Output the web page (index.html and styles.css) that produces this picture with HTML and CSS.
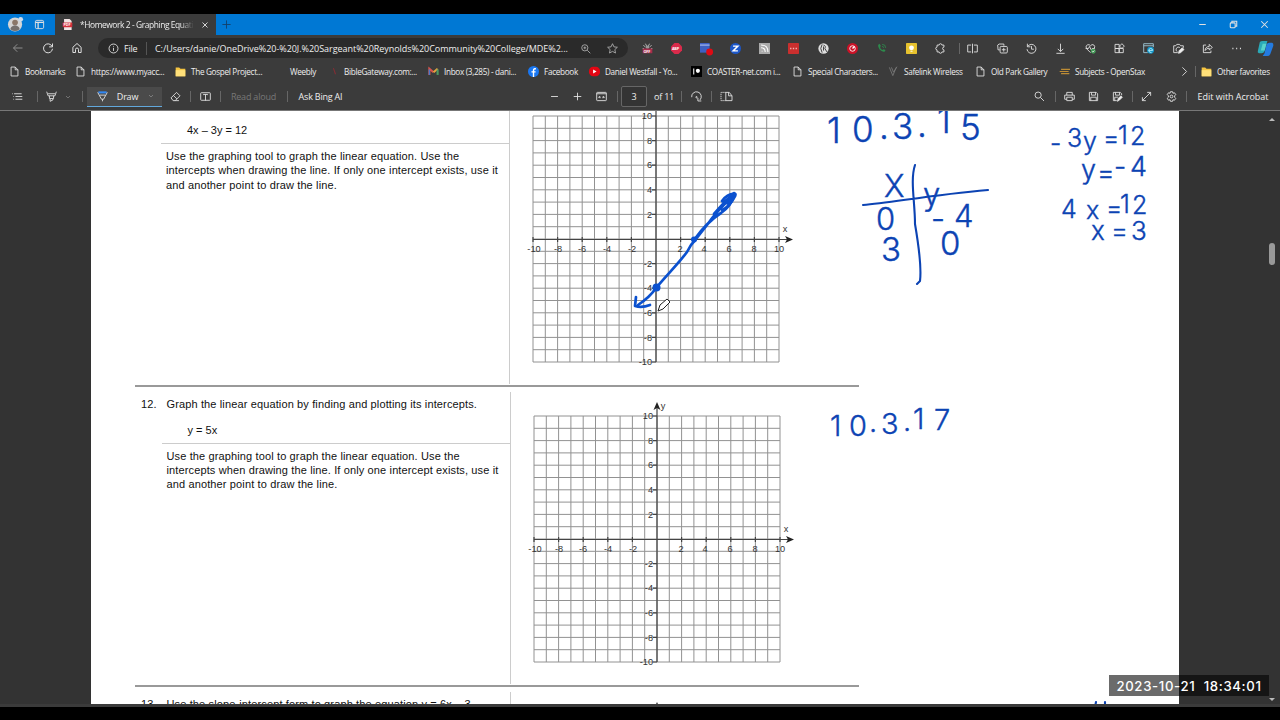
FILE: index.html
```html
<!DOCTYPE html>
<html lang="en">
<head>
<meta charset="UTF-8">
<meta name="viewport" content="width=device-width, initial-scale=1.0">
<title>Homework 2 - Graphing Equations</title>
<link rel="stylesheet" href="styles.css">
</head>
<body>

<!-- shared icons -->
<svg class="defs">
    <symbol id="doc" viewBox="0 0 16 16"><path d="M3 1.5h6l4 4v9H3zM9 1.5v4h4"/></symbol>
    <symbol id="folder" viewBox="0 0 16 16"><path d="M1 2h5l2 2h7v11H1z" fill="#f5c542" stroke="none"/><path d="M1 6h14v9H1z" fill="#ffe07a" stroke="none"/></symbol>
    <symbol id="chev" viewBox="0 0 16 16"><path d="M4 6l4 4 4-4"/></symbol>
</svg>

<div class="browser">
    <div class="titlebar">
        <svg class="avatar" viewBox="0 0 18 18"><circle cx="8.500" cy="9" r="7.500" fill="#d5d5d5"/><circle cx="8.500" cy="7" r="3" fill="#8b7768"/><path d="M3.500 14q1-4 5-4t5 4q-5 4-10 0z" fill="#75706d"/><circle cx="14.500" cy="3.500" r="2.500" fill="#ccdcec"/></svg>
        <svg class="icon spaces" viewBox="0 0 16 16"><rect x="2" y="2" width="12" height="12" rx="2"/><path d="M2 5h12M6 5v9" stroke-width="1.800"/></svg>
        <div class="tab">
            <svg class="icon" viewBox="0 0 16 16"><path d="M3 0h8l3 3v13H3z" fill="#f3e6e6" stroke="none"/><rect x="1" y="5" width="14" height="7" rx="1" fill="#d3313d" stroke="none"/><text x="2.300" y="10.700" class="pdf">PDF</text></svg>
            <span class="tab-title">*Homework 2 - Graphing Equati</span>
            <svg class="icon small" viewBox="0 0 16 16"><path d="M3 3l10 10M13 3L3 13" stroke-width="1.800"/></svg>
        </div>
        <svg class="icon plus" viewBox="0 0 16 16"><path d="M8 2v12M2 8h12"/></svg>
        <div class="window-buttons">
            <svg class="icon" viewBox="0 0 16 16"><path d="M4 8h8"/></svg>
            <svg class="icon" viewBox="0 0 16 16"><rect x="4" y="6" width="6" height="6" rx="1"/><path d="M6 6V4h6v6h-2"/></svg>
            <svg class="icon" viewBox="0 0 16 16"><path d="M4 4l8 8M12 4l-8 8"/></svg>
        </div>
    </div>

    <div class="address-row">
        <svg class="icon dim" viewBox="0 0 16 16"><path d="M14 8H2M7 3L2 8l5 5"/></svg>
        <svg class="icon" viewBox="0 0 16 16"><path d="M13.500 6A6 6 0 1 0 14 9M14 2v4.500H9.500"/></svg>
        <svg class="icon" viewBox="0 0 16 16"><path d="M2.500 7L8 2l5.500 5v7H10v-4q0-2-2-2t-2 2v4H2.500z"/></svg>
        <div class="url">
            <svg class="icon" viewBox="0 0 16 16"><circle cx="8" cy="8" r="6.500"/><path d="M8 7v4.500M8 4.300v1"/></svg>
            <span class="scheme">File</span>
            <span class="path">C:/Users/danie/OneDrive%20-%20J.%20Sargeant%20Reynolds%20Community%20College/MDE%2...</span>
            <svg class="icon search" viewBox="0 0 16 16"><circle cx="7" cy="7" r="4.500"/><path d="M10.500 10.500L15 15M5 7h4M7 5v4"/></svg>
            <svg class="icon star" viewBox="0 0 16 16"><path d="M8 1l2.100 4.600 5 .6-3.700 3.400 1 5L8 12.200l-4.400 2.400 1-5L.9 6.200l5-.6z"/></svg>
        </div>
        <div class="extensions">
            <svg class="icon" viewBox="0 0 16 16"><path d="M5 6L2 3m5 2L5 1m4 4l2-4m0 5l3-3M3 8H1m12 0h2" stroke="#bbb"/><circle cx="8" cy="6" r="2.500" fill="#999" stroke="none"/><rect x="1" y="8" width="14" height="7" rx="1" fill="#a62e4c" stroke="none"/><text x="2" y="14" class="badge">OFF</text></svg>
            <svg class="icon" viewBox="0 0 16 16"><path d="M5 0h6l5 5v6l-5 5H5l-5-5V5z" fill="#d92b4b" stroke="none"/><text x="1.300" y="10.500" class="badge">ABP</text></svg>
            <svg class="icon" viewBox="0 0 16 16"><path d="M0 0h14v14H0z" fill="#3e60c4" stroke="none"/><path d="M0 3h14" stroke="#c8d4fa"/><circle cx="14" cy="13" r="5" fill="#df0b14" stroke="none"/></svg>
            <svg class="icon" viewBox="0 0 16 16"><circle cx="8" cy="8" r="8" fill="#1c57c9" stroke="none"/><path d="M4.500 4.500h7l-7 7h7" stroke="#fff" stroke-width="2"/></svg>
            <svg class="icon" viewBox="0 0 16 16"><rect width="16" height="16" fill="#aaa" stroke="none"/><path d="M3 3q10 0 10 10M3 7q6 0 6 6M4 12h1" stroke="#fff" stroke-width="1.500"/></svg>
            <svg class="icon" viewBox="0 0 16 16"><rect width="16" height="16" rx="1" fill="#ca2f2e" stroke="none"/><path d="M3 8h2m2 0h2m2 0h2" stroke="#f4b2af" stroke-width="2"/></svg>
            <svg class="icon" viewBox="0 0 16 16"><circle cx="8" cy="8" r="7.500" fill="#ddd" stroke="none"/><path d="M6 2q-4 6 0 12M8 3q4 1 2 5l3 5M8 5v6" stroke="#333"/></svg>
            <svg class="icon" viewBox="0 0 16 16"><circle cx="8" cy="8" r="8" fill="#cc1227" stroke="none"/><circle cx="8" cy="8" r="4" stroke="#fff"/><path d="M8 8l3-3" stroke="#fff" stroke-width="2"/></svg>
            <svg class="icon" viewBox="0 0 16 16"><path d="M3 3q0 8 9 10l2-3-3-1-2 1q-3-2-3-4l1-2-2-3z" fill="#2d8a4c" stroke="none"/><path d="M9 2q5 0 5 5M9 5q2 0 2 2" stroke="#2d8a4c"/></svg>
            <svg class="icon" viewBox="0 0 16 16"><rect width="16" height="16" rx="1" fill="#e7c22e" stroke="none"/><circle cx="8" cy="7" r="3.500" fill="#fff" stroke="none"/><path d="M6.500 12h3" stroke="#fff"/></svg>
            <svg class="icon" viewBox="0 0 16 16"><path d="M3 3h3q0-2 2-2t2 2h3v3q-2 0-2 2t2 2v3h-3q0 2-2 2t-2-2H3v-3q-2 0-2-2t2-2z"/></svg>
            <span class="divider"></span>
            <svg class="icon" viewBox="0 0 16 16"><path d="M6 3H1v10h5M10 3h5v10h-5M8 1v14"/></svg>
            <svg class="icon" viewBox="0 0 16 16"><path d="M4 10H1.500L1 3l2-1.500h7V4"/><rect x="4.500" y="5" width="10.500" height="9.500" rx="1.500"/><path d="M9.800 7v5.500M7 9.800h5.500"/></svg>
            <svg class="icon" viewBox="0 0 16 16"><path d="M2.500 5A6.500 6.500 0 1 1 1.500 9M2 1v4.500h4.500M8 4.500V9h3.500"/></svg>
            <svg class="icon" viewBox="0 0 16 16"><path d="M8 1v11M4 8.500L8 12.500l4-4M2 15h12"/></svg>
            <svg class="icon" viewBox="0 0 16 16"><path d="M8 14L2 8q-2-4 2-5.500 2.500-.5 4 1.500 2-3 5-1 2 2 .5 5M1 8h4l1.500-3L9 10l1.500-2H14"/><circle cx="12" cy="12" r="3.500" fill="#459d59" stroke="none"/><path d="M10.300 12l1.200 1.200 2.200-2.200"/></svg>
            <svg class="icon" viewBox="0 0 16 16"><path d="M1.500 2h6v6h-6zM1.500 8h6v6h-6zM7.500 8h6v6h-6zM11.500 1L15 4.500 11.500 8 8 4.500z"/></svg>
            <svg class="icon" viewBox="0 0 16 16"><path d="M15 6V1H1v13h6M1 4h14" stroke="#9ec7d5"/><circle cx="11" cy="10.500" r="5" fill="#1395c9" stroke="none"/><path d="M8 11h6q0-3-3-3-2.500 0-2.500 3t4 3" stroke="#b7edf7"/></svg>
            <svg class="icon" viewBox="0 0 16 16"><path d="M15 7V4h-4L9.500 2h-4L4 4H1v10h6"/><path d="M10 6.500a3.500 3.500 0 1 0-4 6"/><path d="M8 15l1-4 4.500-4L16 9.500 11 14z" fill="#eee"/></svg>
            <svg class="icon" viewBox="0 0 16 16"><path d="M6 3H2v11h11v-3M4.500 11q0-5.500 6-6V2L15 6.500 10.500 10V7.500q-4 0-6 3.500z"/></svg>
            <svg class="icon" viewBox="0 0 16 16"><path d="M2 8h1.500m4 0H9m4 0h1.500" stroke-width="2"/></svg>
            <svg class="copilot" viewBox="0 0 18 18"><path d="M3 2q1-1 3-1h5L8 12q-1 2-3 2H2q-2-1-1-3z" fill="#2ba9b8"/><path d="M10 5q1-2 3-2h3q2 1 1 4l-3 8q-1 2-3 2H6l2-3z" fill="#247be0"/><path d="M6 4h4l-2 7H4z" fill="#58d2cb"/></svg>
        </div>
    </div>

    <div class="bookmarks">
        <a><svg class="icon"><use href="#doc"/></svg>Bookmarks</a>
        <a><svg class="icon"><use href="#doc"/></svg>https://www.myacc...</a>
        <a><svg class="icon"><use href="#folder"/></svg>The Gospel Project...</a>
        <a class="plain">Weebly</a>
        <a class="bible"><svg class="icon" viewBox="0 0 16 16"><path d="M5 3l3 9" stroke="#852d34" stroke-width="1.500"/></svg>BibleGateway.com:...</a>
        <a><svg class="icon" viewBox="0 0 16 16"><path d="M2 13V4l6 5" stroke="#d9534b" stroke-width="3"/><path d="M8 9l6-5" stroke="#e8a33e" stroke-width="3"/><path d="M14 5v8" stroke="#4c9964" stroke-width="3"/><path d="M2 5v8" stroke="#4c79ca" stroke-width="2"/></svg>Inbox (3,285) - dani...</a>
        <a><svg class="icon" viewBox="0 0 16 16"><circle cx="8" cy="8" r="8" fill="#1977f2" stroke="none"/><path d="M11.500 4H10Q8 4 8 7v9M5 8.500h6" stroke="#fff" stroke-width="2"/></svg>Facebook</a>
        <a><svg class="icon" viewBox="0 0 16 16"><rect y="1" width="16" height="14" rx="6" fill="#e30613" stroke="none"/><path d="M6 5l5 3-5 3z" fill="#fff" stroke="none"/></svg>Daniel Westfall - Yo...</a>
        <a><svg class="icon" viewBox="0 0 16 16"><rect width="16" height="16" fill="#000" stroke="none"/><path d="M4 3.500v9" stroke="#fff" stroke-width="1.500"/><circle cx="10" cy="7" r="3" fill="#fff" stroke="none"/></svg>COASTER-net.com i...</a>
        <a><svg class="icon"><use href="#doc"/></svg>Special Characters...</a>
        <a><svg class="icon" viewBox="0 0 16 16"><path d="M2 2l5 12 5-12M5 2l3 7 5-8" stroke="#777"/></svg>Safelink Wireless</a>
        <a><svg class="icon"><use href="#doc"/></svg>Old Park Gallery</a>
        <a><svg class="icon" viewBox="0 0 16 16"><path d="M3 5h13M1 8h13M3 11h12" stroke="#bd8c35" stroke-width="1.800"/></svg>Subjects - OpenStax</a>
        <span class="more"><svg class="icon" viewBox="0 0 16 16"><path d="M5 2l6 6-6 6"/></svg></span>
        <span class="divider"></span>
        <a><svg class="icon"><use href="#folder"/></svg>Other favorites</a>
    </div>

    <div class="pdf-toolbar">
        <svg class="icon" viewBox="0 0 16 16"><path d="M0 4h1m2 0h11M2 8h1m2 0h10M2 12h1m2 0h10"/></svg>
        <span class="divider"></span>
        <svg class="icon" viewBox="0 0 16 16"><path d="M1 1l2 6h10l2-6M3 4h10M5 7v4h6V7M6 11v4l4-2v-2"/></svg>
        <svg class="icon small dim"><use href="#chev"/></svg>
        <span class="divider"></span>
        <div class="draw-button">
            <svg class="icon" viewBox="0 0 16 16"><path d="M2 2h12" stroke="#3289f5" stroke-width="3"/><path d="M1 2l5.500 10h3L15 2M4 6h8M8 12v3"/></svg>
            <span>Draw</span>
            <svg class="icon small dim"><use href="#chev"/></svg>
        </div>
        <svg class="icon" viewBox="0 0 16 16"><path d="M1.500 10l8-8 5 5-7 7h-3zM5 6.500l5 5M7 14h6"/></svg>
        <span class="divider"></span>
        <svg class="icon" viewBox="0 0 16 16"><rect x="1" y="2.500" width="14" height="11" rx="1"/><path d="M5 6V5h6v1M8 5v9"/></svg>
        <span class="divider"></span>
        <span class="muted">Read aloud</span>
        <span class="divider"></span>
        <span>Ask Bing AI</span>
        <span></span>
        <svg class="icon" viewBox="0 0 16 16"><path d="M3 8h10"/></svg>
        <svg class="icon" viewBox="0 0 16 16"><path d="M2.500 8h11M8 2.500v11"/></svg>
        <svg class="icon" viewBox="0 0 16 16"><rect x="1" y="2" width="14" height="12" rx="1"/><path d="M1 4h14M4 9h3M9 9h3M5.500 7.500L4 9l1.500 1.500M10.500 7.500L12 9l-1.500 1.500"/></svg>
        <span class="divider"></span>
        <span class="page-number">3</span>
        <span>of 11</span>
        <span class="divider"></span>
        <svg class="icon" viewBox="0 0 16 16"><path d="M1 9a7 7 0 1 1 12 4M10 10v4.500h5"/><circle cx="8" cy="9" r="1"/></svg>
        <span class="divider"></span>
        <svg class="icon" viewBox="0 0 16 16"><path d="M7 2v12h9V7l-4-5zM11 2v5h5"/><path d="M7 2H0v12h7" stroke-dasharray="2 1"/></svg>
        <span></span>
        <svg class="icon" viewBox="0 0 16 16"><circle cx="6" cy="6" r="4.500"/><path d="M9.500 9.500l5 5"/></svg>
        <span class="divider"></span>
        <svg class="icon" viewBox="0 0 16 16"><path d="M4 6V2h8v4M4 12H1V6h14v6h-3M4 9h8v5H4z"/></svg>
        <svg class="icon" viewBox="0 0 16 16"><path d="M2 2h10l2 2v10H2zM5 2v4h6V2M4 14V9h8v5"/></svg>
        <svg class="icon" viewBox="0 0 16 16"><path d="M7 14H2V2h10l2 2v2M5 2v4h6V2M4 14V9h5"/><path d="M8 15l1-4 4-4 2 2-4 4z" fill="#eee"/></svg>
        <span class="divider"></span>
        <svg class="icon" viewBox="0 0 16 16"><path d="M2 14L14 2M9 2h5v5M2 9v5h5"/></svg>
        <svg class="icon" viewBox="0 0 16 16"><path d="M6.500 1h3l.6 2.300 2.300-.7 1.800 2.700L12.500 7v2l1.700 1.700-1.800 2.700-2.300-.7-.6 2.300h-3l-.6-2.300-2.300.7-1.800-2.700L3.500 9V7L1.800 5.300l1.800-2.700 2.300.7z"/><circle cx="8" cy="8" r="2"/></svg>
        <span class="divider"></span>
        <span class="acrobat">Edit with Acrobat</span>
    </div>

    <div class="viewer">
        <div class="page">
            <div class="question">
                <div class="question-text">
                    <div class="prompt"><span class="number">11.</span>Graph the linear equation by finding and plotting its intercepts.</div>
                    <div class="equation">4x &ndash; 3y = 12</div>
                    <p>Use the graphing tool to graph the linear equation. Use the<br>intercepts when drawing the line. If only one intercept exists, use it<br>and another point to draw the line.</p>
                </div>
                <svg class="graph">
                    <g id="graph">
                        <path class="grid" d="M10 20h246m-246 12.3h246m-246 12.3h246m-246 12.3h246m-246 12.3h246m-246 12.3h246m-246 12.3h246m-246 12.3h246m-246 12.3h246m-246 12.3h246m-246 12.3h246m-246 12.3h246m-246 12.3h246m-246 12.3h246m-246 12.3h246m-246 12.3h246m-246 12.3h246m-246 12.3h246m-246 12.3h246m-246 12.3h246m-246 12.3h246"/>
                        <path class="grid" d="M10 20v246m12.3-246v246m12.3-246v246m12.3-246v246m12.3-246v246m12.3-246v246m12.3-246v246m12.3-246v246m12.3-246v246m12.3-246v246m12.3-246v246m12.3-246v246m12.3-246v246m12.3-246v246m12.3-246v246m12.3-246v246m12.3-246v246m12.3-246v246m12.3-246v246m12.3-246v246m12.3-246v246"/>
                        <path class="axis" d="M10 143.500h256M133 10v256"/>
                        <path class="axis" d="M10 141v5m24.6-5v5m24.6-5v5m24.6-5v5m24.6-5v5m49.2-5v5m24.6-5v5m24.6-5v5m24.6-5v5m24.6-5v5M129 20h4m-4 24.6h4m-4 24.6h4m-4 24.6h4m-4 24.6h4m-4 49.2h4m-4 24.6h4m-4 24.6h4m-4 24.6h4m-4 24.6h4"/>
                        <path class="tip" d="M270 143.500l-8-3.500 2 3.500-2 3.500zM133 6l-3.500 8 3.500-2 3.500 2z"/>
                        <g class="labels" text-anchor="middle">
                            <text x="262" y="136">x</text><text x="139" y="13">y</text>
                            <text x="11" y="156">-10</text><text x="35" y="156">-8</text><text x="59" y="156">-6</text><text x="84" y="156">-4</text><text x="109" y="156">-2</text>
                            <text x="157" y="156">2</text><text x="181" y="156">4</text><text x="206" y="156">6</text><text x="231" y="156">8</text><text x="256" y="156">10</text>
                        </g>
                        <g class="labels" text-anchor="end">
                            <text x="129" y="23.200">10</text><text x="129" y="47.800">8</text><text x="129" y="72.400">6</text><text x="129" y="97">4</text><text x="129" y="121.600">2</text>
                            <text x="129" y="170.800">-2</text><text x="129" y="195.400">-4</text><text x="129" y="220">-6</text><text x="129" y="244.600">-8</text><text x="129" y="269.200">-10</text>
                        </g>
                    </g>
                </svg>
            </div>
            <div class="question shifted">
                <div class="question-text">
                    <div class="prompt"><span class="number">12.</span>Graph the linear equation by finding and plotting its intercepts.</div>
                    <div class="equation">y = 5x</div>
                    <p>Use the graphing tool to graph the linear equation. Use the<br>intercepts when drawing the line. If only one intercept exists, use it<br>and another point to draw the line.</p>
                </div>
                <svg class="graph"><use href="#graph"/></svg>
            </div>
            <div class="question shifted">
                <div class="question-text">
                    <div class="prompt"><span class="number">13.</span>Use the slope-intercept form to graph the equation y = 6x &ndash; 3.</div>
                </div>
                <svg class="graph"><path class="axis" d="M133 10v20"/><path class="tip" d="M133 6l-3.500 8 3.500-2 3.500 2z"/></svg>
            </div>

            <!-- pen annotations on top of the page -->
            <svg class="ink" viewBox="91 111 1088 593">
                <path class="stroke thick" d="M638 305Q650 297 656 288C666 276 678 264 687 252Q691 244 696 239L707 225C714 215 722 206 733 196M694 240C702 229 713 218 721 213Q731 206 735 194Q728 193 722 201"/>
                <path class="stroke thick" d="M714 214Q726 200 734 193Q737 194 734 198Q730 206 722 210"/>
                <path class="stroke thick" d="M636 297L635 306Q642 308 650 305"/>
                <path d="M721 202l11-7-2 11z" fill="#0b51cf"/>
                <circle cx="656.500" cy="287.500" r="4" fill="#0b51cf"/><circle cx="694" cy="239.500" r="3" fill="#0b51cf"/>
                <path class="stroke" d="M915 165C910 180 915 202 915 224Q922 265 920 281L917 284M863 205C890 203 930 195 988 190"/>
                <g class="handwriting">
                    <text font-size="35" x="827 852 879 892 917 937 960" y="143 142 139 139 137 133 140">10.3.15</text>
                    <text font-size="31" x="884 923" y="197 205">Xy</text>
                    <text font-size="31" x="876 931 954" y="230 230 227">0-4</text>
                    <text font-size="33" x="881 940" y="261 255">30</text>
                    <text font-size="25" x="1050 1067 1083 1103 1118 1130" y="152 147 150 147 144 145">-3y=12</text>
                    <text font-size="27" x="1081 1097 1114 1130" y="179 182 176 176">y=-4</text>
                    <text font-size="25" x="1061 1086 1106 1120 1132" y="218 219 217 213 214">4x=12</text>
                    <text font-size="26" x="1091 1111 1131" y="240 240 240">x=3</text>
                    <text font-size="29" x="830 849 869 881 903 913 934" y="436 436 432 434 431 429 430">10.3.17</text>
                </g>
                <path class="stroke" d="M1096 702l-1 5M1105 702v5"/>
                <path class="pen" d="M658 311l2-6 7-6 3 3-7 7z"/>
            </svg>
        </div>
        <div class="scrollbar">
            <span class="up"></span>
            <span class="thumb"></span>
            <span class="down"></span>
        </div>
        <div class="timestamp">2023-10-21&nbsp; 18:34:01</div>
    </div>
</div>

</body>
</html>
```
FILE: styles.css
```css
* {
    box-sizing: border-box;
}

body {
    margin: 0;
    width: 1280px;
    height: 720px;
    padding: 14px 0 13px;
    background-color: #000;
    color: #eee;
    font-family: "Open Sans", "Noto Sans", sans-serif;
    font-size: 9px;
    letter-spacing: -0.2px;
    overflow: hidden;
}

.defs {
    position: absolute;
    width: 0;
    height: 0;
}

.browser {
    height: 693px;
    display: flex;
    flex-direction: column;
    background-color: #3b3b3b;
    white-space: nowrap;
}

.icon {
    width: 11px;
    height: 11px;
    flex: none;
    fill: none;
    stroke: #e2e2e2;
    stroke-width: 1.3;
    overflow: visible;
}
.icon.small {
    width: 8px;
    height: 8px;
}
.dim {
    opacity: 0.5;
}
.divider {
    width: 1px;
    height: 11px;
    background-color: #666;
}

/* title bar */
.titlebar {
    height: 21px;
    display: flex;
    align-items: center;
    background-color: #0078d4;
}
.avatar {
    width: 17px;
    height: 17px;
    margin-left: 7px;
}
.spaces {
    margin-left: 10px;
}
.tab {
    width: 161px;
    height: 21px;
    margin-left: 10px;
    padding: 0 7px 0 7px;
    display: flex;
    align-items: center;
    background-color: #3b3b3b;
}
.tab-title {
    width: 116px;
    margin: 0 7px 0 7px;
    overflow: hidden;
    font-size: 8.4px;
    letter-spacing: -0.4px;
    -webkit-mask-image: linear-gradient(to right, #000 88%, transparent);
    mask-image: linear-gradient(to right, #000 88%, transparent);
}
.pdf, .badge {
    fill: #fff;
    stroke: none;
    font-size: 5.5px;
    font-weight: bold;
}
.plus {
    margin-left: 5px;
    stroke: #123f69;
}
.window-buttons {
    margin-left: auto;
    margin-right: 9px;
    display: flex;
    gap: 18px;
}
.window-buttons .icon {
    width: 13px;
    height: 13px;
}

/* address bar */
.address-row {
    height: 26px;
    padding-left: 12px;
    display: flex;
    align-items: center;
}
.address-row > .icon {
    width: 12px;
    height: 12px;
    margin-right: 17.5px;
}
.url {
    width: 530px;
    height: 20px;
    margin-left: -2.5px;
    padding: 0 10px;
    border-radius: 10px;
    display: flex;
    align-items: center;
    background-color: #2a2a2a;
}
.scheme {
    width: 23px;
    margin: 0 8px 0 5px;
    border-right: 1px solid #555;
}
.path {
    width: 426px;
    font-size: 9px;
    letter-spacing: -0.04px;
}
.url .search {
    margin-right: 16px;
    opacity: 0.7;
}
.url .star {
    opacity: 0.7;
}
.extensions {
    display: flex;
    align-items: center;
    margin-left: 13.5px;
}
.extensions .icon {
    margin-right: 18.35px;
}
.extensions .divider {
    margin: 0 7px 0 -5px;
}
.copilot {
    width: 17px;
    height: 17px;
    margin-left: -4px;
}

/* favorites */
.bookmarks {
    height: 23px;
    padding: 0 0 2px 9px;
    display: grid;
    grid-template-columns: 66px 100px 110px 45px 98px 100px 61px 102px 101px 96px 87px 84px 120px 16px 6px 78px;
    align-items: center;
    font-size: 8.2px;
    letter-spacing: -0.32px;
}
.bookmarks a {
    display: flex;
    align-items: center;
    gap: 5px;
}
.bookmarks .plain {
    padding-left: 5px;
}
.bookmarks .bible {
    gap: 3px;
}
.more {
    display: flex;
}

/* pdf tools */
.pdf-toolbar {
    height: 27px;
    padding: 0 0 1px 4px;
    display: grid;
    grid-template-columns: 26px 14px 14px 20px 9px 75px 26px 4px 26px 4px 63px 4px 63px 190px 24px 22px 27px 4px 30px 30px 4px 26px 4px 26px 287px 27px 4px 24px 24px 25px 4px 25px 25px 4px 90px;
    align-items: center;
    justify-items: center;
    font-size: 9px;
    line-height: 11px;
    letter-spacing: -0.2px;
    border-bottom: 1px solid #777;
}
.draw-button {
    width: 75px;
    height: 20px;
    padding: 0 7px 0 10px;
    display: flex;
    align-items: center;
    justify-content: space-between;
    background-color: #4a4a4a;
    border-bottom: 1px solid #62a8dc;
}
.muted {
    color: #777;
}
.acrobat {
    letter-spacing: -0.04px;
}
.page-number {
    width: 26px;
    height: 21px;
    line-height: 19px;
    text-align: center;
    border: 1px solid #666;
    border-radius: 2px;
    background-color: #343434;
}

/* document */
.viewer {
    height: 593px;
    position: relative;
    display: flex;
    padding-left: 91px;
    background-color: #333;
    overflow: hidden;
}
.page {
    width: 1088px;
    height: 593px;
    padding-left: 44px;
    position: relative;
    overflow: hidden;
    background-color: #fff;
    color: #111;
    font-family: "Liberation Sans", Arial, sans-serif;
    font-size: 11px;
    letter-spacing: 0.13px;
}
.question {
    width: 724px;
    height: 300px;
    display: flex;
    border-bottom: 2px solid #999;
}
.question:first-child {
    margin-top: -24px;
}
.question-text {
    width: 375px;
    margin-bottom: 1px;
    padding: 10px 0 0 31px;
    border-right: 1px solid #ccc;
}
.shifted .question-text {
    width: 376px;
    margin-top: 5px;
    padding: 5px 0 0 31.5px;
}
.number {
    display: inline-block;
    width: 25.5px;
    margin-left: -25.5px;
}
.prompt {
    line-height: 15px;
}
.equation {
    height: 32px;
    margin-left: -5px;
    padding: 10px 0 0 26px;
    line-height: 16px;
    letter-spacing: 0;
    border-bottom: 1px solid #ccc;
}
.shifted .equation {
    height: 31.5px;
    padding-top: 9.5px;
}
.question p {
    margin: 5px 0 0;
    line-height: 14.3px;
}
.graph {
    width: 280px;
    height: 280px;
    margin: 8.7px 0 0 13px;
    flex: none;
}
.grid {
    fill: none;
    stroke: #929292;
    stroke-width: 1;
}
.axis {
    fill: none;
    stroke: #444;
    stroke-width: 1.2;
}
.tip {
    fill: #222;
}
.labels {
    fill: #333;
    font-size: 9.2px;
    letter-spacing: 0;
}

.ink {
    position: absolute;
    top: 0;
    left: 0;
    width: 1088px;
    height: 593px;
}
.stroke {
    fill: none;
    stroke: #0c43b3;
    stroke-width: 2.1;
    stroke-linecap: round;
    stroke-linejoin: round;
}
.stroke.thick {
    stroke: #0b51cf;
    stroke-width: 2.7;
}
.handwriting {
    font-family: Inter, sans-serif;
    font-weight: 300;
    fill: #0c43b3;
    stroke: #0c43b3;
    stroke-width: 0.4;
    letter-spacing: 0;
}
.pen {
    fill: #fff;
    stroke: #222;
}

.scrollbar {
    width: 14px;
    margin: 0 1px 0 auto;
    padding: 7px 0 3px;
    display: flex;
    flex-direction: column;
    align-items: center;
}
.up, .down {
    border: 3px solid transparent;
}
.up {
    border-top: 0;
    border-bottom-color: #bbb;
}
.down {
    margin-top: auto;
    border-bottom: 0;
    border-top-color: #bbb;
}
.thumb {
    width: 6px;
    height: 22px;
    margin-top: 122px;
    border-radius: 3px;
    background-color: #999;
}
.timestamp {
    position: absolute;
    left: 1109px;
    top: 564px;
    width: 160px;
    height: 21px;
    line-height: 22px;
    text-align: center;
    color: #fff;
    font-family: Inter, sans-serif;
    font-size: 13.2px;
    font-weight: 500;
    letter-spacing: 0.65px;
    background-color: rgba(0, 0, 0, 0.58);
}
```
